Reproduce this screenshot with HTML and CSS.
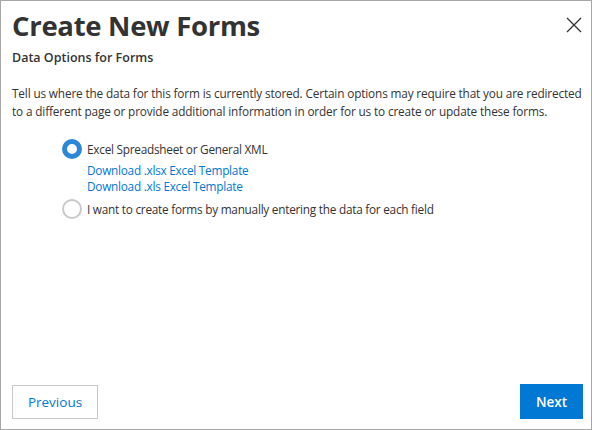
FILE: index.html
```html
<!DOCTYPE html>
<html lang="en">
<head>
    <meta charset="UTF-8">
    <meta name="viewport" content="width=device-width, initial-scale=1.0">
    <title>Create New Forms</title>
    <link rel="stylesheet" href="styles.css">
</head>
<body>
    <div class="dialog">
        <div class="header">
            <h1>Create New Forms</h1>
            <button class="close" aria-label="Close">
                <svg width="16" height="16" viewBox="0 0 16 16">
                    <path d="M1 1 L15 15 M15 1 L1 15" stroke="#333" stroke-width="1.3" fill="none"/>
                </svg>
            </button>
        </div>
        <h2>Data Options for Forms</h2>
        <p class="intro">Tell us where the data for this form is currently stored. Certain options may require that you are redirected to a different page or provide additional information in order for us to create or update these forms.</p>

        <div class="options">
            <label class="option">
                <span class="radio checked"></span>
                <span>Excel Spreadsheet or General XML</span>
            </label>
            <div class="links">
                <a href="#">Download .xlsx Excel Template</a>
                <a href="#">Download .xls Excel Template</a>
            </div>
            <label class="option">
                <span class="radio"></span>
                <span>I want to create forms by manually entering the data for each field</span>
            </label>
        </div>

        <div class="footer">
            <button class="btn">Previous</button>
            <button class="btn primary">Next</button>
        </div>
    </div>
</body>
</html>
```

FILE: styles.css
```css
html, body {
    margin: 0;
    padding: 0;
}
body {
    font-family: "Open Sans", "Noto Sans", sans-serif;
    color: #333;
    background: #fff;
}
.dialog {
    box-sizing: border-box;
    width: 592px;
    height: 430px;
    border: 1px solid #a6a6a6;
    padding: 0 8px 10px 11px;
    display: flex;
    flex-direction: column;
}
.header {
    display: flex;
    justify-content: space-between;
    align-items: flex-start;
}
h1 {
    margin: 7px 0 0;
    font-size: 27.5px;
    font-weight: 700;
    line-height: 36px;
    color: #333;
    letter-spacing: -0.3px;
}
.close {
    margin: 16px 1px 0 0;
    padding: 0;
    border: 0;
    background: none;
    width: 16px;
    height: 16px;
}
h2 {
    margin: 4px 0 0;
    font-size: 12.5px;
    font-weight: 600;
    line-height: 20px;
    color: #333;
}
.intro {
    margin: 16px 0 0;
    font-size: 11.8px;
    line-height: 18px;
    letter-spacing: -0.15px;
}
.options {
    margin: 18px 0 0 50px;
    font-size: 11.8px;
    letter-spacing: -0.25px;
}
.option {
    display: flex;
    align-items: center;
    gap: 5px;
    height: 22px;
}
.radio {
    box-sizing: border-box;
    width: 20px;
    height: 20px;
    border-radius: 50%;
    border: 2px solid #c8c8c8;
}
.radio.checked {
    border: 5px solid #2b88d8;
}
.links {
    display: flex;
    flex-direction: column;
    padding-left: 25px;
    margin: 2px 0 4px;
}
.links a {
    color: #0078d4;
    text-decoration: none;
    line-height: 16px;
}
.footer {
    margin-top: auto;
    display: flex;
    justify-content: space-between;
    align-items: flex-end;
}
.btn {
    font-family: inherit;
    font-size: 13.5px;
    height: 34px;
    width: 86px;
    border: 1px solid #c8c8c8;
    background: #fff;
    color: #0078d4;
    cursor: pointer;
}
.btn.primary {
    width: 63px;
    height: 35px;
    border: 0;
    background: #0078d4;
    color: #fff;
    font-weight: 600;
}
```
